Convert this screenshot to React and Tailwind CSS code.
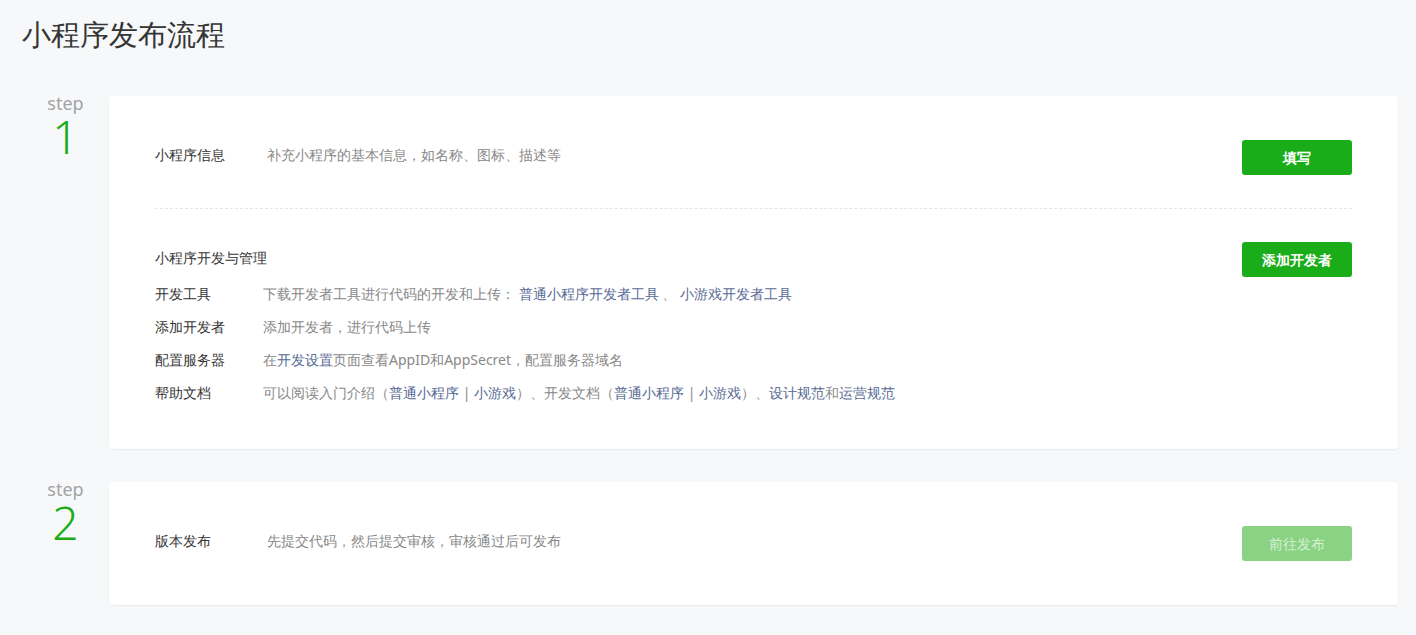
import React from "react";

const font = "font-['Microsoft_YaHei','Noto_Sans_CJK_SC',sans-serif]";

const Link = ({ children }) => <span className="text-[#576b95]">{children}</span>;

const Step = ({ n }) => (
  <div className="w-[87px] shrink-0 flex flex-col items-center">
    <div className="text-[18px] leading-[16px] text-[#a3a3a3] mt-[-1px]">step</div>
    <div className="text-[46px] leading-[54px] text-[#1aad19] font-light mt-[-2px]">{n}</div>
  </div>
);

const Button = ({ children, disabled }) => (
  <button
    className={
      disabled
        ? "w-[110px] h-[35px] rounded-[3px] bg-[#8ad384] text-[#d7f1d4] text-[14px]"
        : "w-[110px] h-[35px] rounded-[3px] bg-[#1aad19] text-white text-[14px] font-bold"
    }
  >
    {children}
  </button>
);

const Row = ({ label, children }) => (
  <div className="flex h-[33px] items-center text-[14px]">
    <div className="w-[108px] text-[#353535]">{label}</div>
    <div className="text-[#888]">{children}</div>
  </div>
);

export default function App() {
  return (
    <div className={`${font} bg-[#f7f8fa] min-h-[635px] w-[1416px] pl-[22px] pt-[15px]`}>
      <h1 className="text-[29px] leading-[38px] text-[#353535]">小程序发布流程</h1>
      <div className="flex mt-[43px]">
        <Step n="1" />
        <div className="w-[1289px] bg-white rounded-[4px] shadow-[0_1px_2px_rgba(0,0,0,0.06)] px-[46px] pt-[44px] pb-[40px]">
          <div className="flex justify-between items-center h-[35px]">
            <div className="flex text-[14px] -mt-[6px]">
              <span className="w-[112px] text-[#353535]">小程序信息</span>
              <span className="text-[#888]">补充小程序的基本信息，如名称、图标、描述等</span>
            </div>
            <Button>填写</Button>
          </div>
          <div className="border-t border-dashed border-[#e4e6ea] mt-[33px] mb-[33px]" />
          <div className="flex justify-between items-center h-[35px]">
            <span className="text-[14px] text-[#353535] -mt-[4px]">小程序开发与管理</span>
            <Button>添加开发者</Button>
          </div>
          <div>
            <Row label="开发工具">
              下载开发者工具进行代码的开发和上传： <Link>普通小程序开发者工具</Link> 、 <Link>小游戏开发者工具</Link>
            </Row>
            <Row label="添加开发者">添加开发者，进行代码上传</Row>
            <Row label="配置服务器">
              在<Link>开发设置</Link>页面查看AppID和AppSecret，配置服务器域名
            </Row>
            <Row label="帮助文档">
              可以阅读入门介绍（<Link>普通小程序</Link> | <Link>小游戏</Link>）、开发文档（<Link>普通小程序</Link> | <Link>小游戏</Link>）、<Link>设计规范</Link>和<Link>运营规范</Link>
            </Row>
          </div>
        </div>
      </div>
      <div className="flex mt-[33px]">
        <Step n="2" />
        <div className="w-[1289px] h-[123px] bg-white rounded-[4px] shadow-[0_1px_2px_rgba(0,0,0,0.06)] px-[46px] flex justify-between items-center">
          <div className="flex text-[14px] -mt-[6px]">
            <span className="w-[112px] text-[#353535]">版本发布</span>
            <span className="text-[#888]">先提交代码，然后提交审核，审核通过后可发布</span>
          </div>
          <Button disabled>前往发布</Button>
        </div>
      </div>
    </div>
  );
}
